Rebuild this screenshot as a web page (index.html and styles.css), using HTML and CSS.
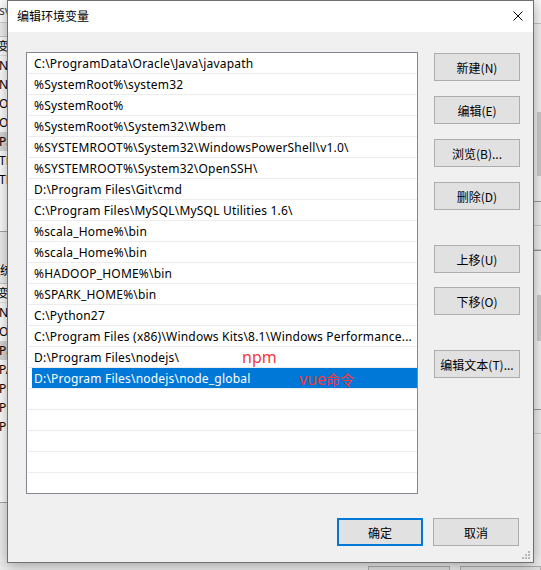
FILE: index.html
```html
<!DOCTYPE html>
<html lang="zh-CN">
<head>
    <meta charset="UTF-8">
    <title>编辑环境变量</title>
    <link rel="stylesheet" href="styles.css">
</head>
<body>
    <div class="desktop">
        <!-- parent window (环境变量) peeking out behind the dialog -->
        <div class="back-left">
            <div class="bl-title">sv</div>
            <div class="bl-list">
                <div class="bl-row bl-head">变量</div>
                <div class="bl-row">NUMBER</div>
                <div class="bl-row">NVM</div>
                <div class="bl-row">OneDrive</div>
                <div class="bl-row">OneDrive</div>
                <div class="bl-row bl-sel">Path</div>
                <div class="bl-row">TEMP</div>
                <div class="bl-row">TMP</div>
            </div>
            <div class="bl-label">系统变量</div>
            <div class="bl-list bl-list-sys">
                <div class="bl-row bl-head">变量</div>
                <div class="bl-row">NUMBER</div>
                <div class="bl-row">OS</div>
                <div class="bl-row bl-sel">Path</div>
                <div class="bl-row">PATHEXT</div>
                <div class="bl-row">PROCESSOR</div>
                <div class="bl-row">PROCESSOR</div>
                <div class="bl-row">PROCESSOR</div>
            </div>
        </div>

        <div class="back-right">
            <div class="br-top"></div>
            <div class="br-track"><span class="br-thumb"></span></div>
            <div class="br-row"></div>
            <div class="br-row"></div>
            <div class="br-track br-track-sys"><span class="br-thumb"></span></div>
            <div class="br-row"></div>
        </div>

        <div class="back-bottom">
            <span class="back-btn"></span>
            <span class="back-btn"></span>
        </div>

        <div class="dialog">
            <div class="titlebar">
                <span class="title">编辑环境变量</span>
                <svg class="close" width="10" height="10" viewBox="0 0 10 10">
                    <path d="M0.5 0.5 L9.5 9.5 M9.5 0.5 L0.5 9.5" stroke="#000" stroke-width="1" fill="none"/>
                </svg>
            </div>

            <div class="dialog-body">
                <div class="main">
                    <div class="path-list">
                        <div class="row"><span class="cell">C:\ProgramData\Oracle\Java\javapath</span></div>
                        <div class="row"><span class="cell">%SystemRoot%\system32</span></div>
                        <div class="row"><span class="cell">%SystemRoot%</span></div>
                        <div class="row"><span class="cell">%SystemRoot%\System32\Wbem</span></div>
                        <div class="row"><span class="cell">%SYSTEMROOT%\System32\WindowsPowerShell\v1.0\</span></div>
                        <div class="row"><span class="cell">%SYSTEMROOT%\System32\OpenSSH\</span></div>
                        <div class="row"><span class="cell">D:\Program Files\Git\cmd</span></div>
                        <div class="row"><span class="cell">C:\Program Files\MySQL\MySQL Utilities 1.6\</span></div>
                        <div class="row"><span class="cell">%scala_Home%\bin</span></div>
                        <div class="row"><span class="cell">%scala_Home%\bin</span></div>
                        <div class="row"><span class="cell">%HADOOP_HOME%\bin</span></div>
                        <div class="row"><span class="cell">%SPARK_HOME%\bin</span></div>
                        <div class="row"><span class="cell">C:\Python27</span></div>
                        <div class="row"><span class="cell">C:\Program Files (x86)\Windows Kits\8.1\Windows Performance...</span></div>
                        <div class="row"><span class="cell">D:\Program Files\nodejs\</span></div>
                        <div class="row selected"><span class="cell">D:\Program Files\nodejs\node_global</span></div>
                        <div class="row"><span class="cell"></span></div>
                        <div class="row"><span class="cell"></span></div>
                        <div class="row"><span class="cell"></span></div>
                        <div class="row"><span class="cell"></span></div>
                        <div class="row"><span class="cell"></span></div>

                        <!-- hand-written notes on top of the list -->
                        <span class="note note-npm">npm</span>
                        <span class="note note-vue">vue<small>命令</small></span>
                    </div>

                    <div class="side-buttons">
                        <div class="btn-group">
                            <button class="btn">新建(N)</button>
                            <button class="btn">编辑(E)</button>
                            <button class="btn">浏览(B)...</button>
                            <button class="btn">删除(D)</button>
                        </div>
                        <div class="btn-group">
                            <button class="btn">上移(U)</button>
                            <button class="btn">下移(O)</button>
                        </div>
                        <div class="btn-group">
                            <button class="btn">编辑文本(T)...</button>
                        </div>
                    </div>
                </div>

                <div class="footer">
                    <button class="btn default">确定</button>
                    <button class="btn">取消</button>
                </div>
            </div>

            <svg class="grip" width="8" height="8" viewBox="0 0 8 8">
                <rect x="6" y="0" width="2" height="2" fill="#b8b8b8"/>
                <rect x="3" y="3" width="2" height="2" fill="#b8b8b8"/>
                <rect x="6" y="3" width="2" height="2" fill="#b8b8b8"/>
                <rect x="0" y="6" width="2" height="2" fill="#b8b8b8"/>
                <rect x="3" y="6" width="2" height="2" fill="#b8b8b8"/>
                <rect x="6" y="6" width="2" height="2" fill="#b8b8b8"/>
            </svg>
        </div>
    </div>
</body>
</html>
```

FILE: styles.css
```css
* {
    margin: 0;
    padding: 0;
    box-sizing: border-box;
}

body {
    font-family: 'Noto Sans', 'Noto Sans CJK SC', sans-serif;
    font-size: 12px;
    color: #000;
    background: #f0f0f0;
}

.desktop {
    position: relative;
    width: 541px;
    height: 570px;
    overflow: hidden;
    background: #ececec;
}

/* ---- parent window behind ---- */

.back-left {
    position: absolute;
    left: 0;
    top: 0;
    width: 7px;
    height: 570px;
    background: #f0f0f0;
    overflow: hidden;
    white-space: nowrap;
}

.bl-title {
    height: 23px;
    line-height: 22px;
    background: #fff;
    border-bottom: 1px solid #d4d4d4;
    color: #444;
    text-indent: -1px;
}

.bl-list {
    margin-top: 13px;
    height: 196px;
    background: #fff;
    border-top: 1px solid #c8c8c8;
    border-bottom: 1px solid #a8a8a8;
}

.bl-row {
    height: 19px;
    line-height: 19px;
    text-indent: -1px;
}

.bl-head {
    text-indent: -3px;
    border-bottom: 1px solid #e4e4e4;
}

.bl-sel {
    background: #d9d9d9;
}

.bl-label {
    margin-top: 27px;
    height: 24px;
    line-height: 24px;
    text-indent: -12px;
}

.bl-list-sys {
    margin-top: 0;
    height: 220px;
}

.back-right {
    position: absolute;
    left: 533px;
    top: 0;
    width: 8px;
    height: 570px;
    background: #f0f0f0;
}

.br-top {
    height: 24px;
    background: #fafafa;
    border-bottom: 1px solid #c8c8c8;
}

.br-track {
    position: relative;
    height: 178px;
    background: #f4f4f4;
    border-left: 1px solid #e0e0e0;
    border-bottom: 1px solid #9a9a9a;
}

.br-thumb {
    position: absolute;
    left: 3px;
    top: 88px;
    width: 5px;
    height: 64px;
    background: #cdcdcd;
}

.br-row {
    height: 24px;
    border-bottom: 1px solid #cfcfcf;
}

.br-track-sys {
    height: 160px;
    border-top: 1px solid #9a9a9a;
}

.br-track-sys .br-thumb {
    top: 44px;
    height: 46px;
}

.back-bottom {
    position: absolute;
    left: 0;
    top: 562px;
    width: 541px;
    height: 8px;
    display: flex;
    gap: 10px;
    padding: 4px 0 0 368px;
    background: #ececec;
}

.back-btn {
    width: 86px;
    height: 28px;
    background: #e1e1e1;
    border: 1px solid #adadad;
}

/* ---- the dialog ---- */

.dialog {
    position: absolute;
    left: 7px;
    top: 0;
    width: 527px;
    height: 563px;
    background: #f0f0f0;
    border: 1px solid #707070;
    box-shadow: 0 2px 14px rgba(0, 0, 0, 0.35);
    font-family: 'Noto Sans CJK SC', 'Noto Sans', sans-serif;
}

.titlebar {
    height: 31px;
    background: #fff;
    display: flex;
    align-items: center;
    justify-content: space-between;
    padding: 0 10px 1px 9px;
}

.title {
    font-size: 12px;
    line-height: 16px;
}

.close {
    display: block;
}

.dialog-body {
    padding: 20px 13px 16px 18px;
}

.main {
    display: flex;
    gap: 16px;
}

.path-list {
    position: relative;
    width: 392px;
    height: 442px;
    background: #fff;
    border: 1px solid #828790;
    padding-left: 1px;
    overflow: hidden;
    font-family: 'Noto Sans', 'Noto Sans CJK SC', sans-serif;
}

.row {
    height: 21px;
    border-bottom: 1px solid #ececec;
}

.cell {
    display: block;
    height: 20px;
    line-height: 22px;
    margin-left: 4px;
    padding: 0 4px 0 2px;
    letter-spacing: 0.2px;
    white-space: nowrap;
    overflow: hidden;
}

.row.selected .cell {
    background: #0078d7;
    color: #fff;
}

.note {
    position: absolute;
    font-family: 'Noto Sans', 'Noto Sans CJK SC', sans-serif;
    font-size: 16px;
    line-height: 20px;
    color: #f2383a;
    white-space: nowrap;
}

.note small {
    font-size: 14px;
    font-family: 'Noto Sans CJK SC', sans-serif;
}

.note-npm {
    left: 215px;
    top: 294px;
}

.note-vue {
    left: 272px;
    top: 316px;
}

.side-buttons {
    display: flex;
    flex-direction: column;
    gap: 35px;
    padding-top: 1px;
}

.btn-group {
    display: flex;
    flex-direction: column;
    gap: 15px;
}

.btn-group:nth-child(2) {
    gap: 14px;
}

.btn {
    width: 86px;
    height: 28px;
    background: #e1e1e1;
    border: 1px solid #adadad;
    font-family: 'Noto Sans CJK SC', sans-serif;
    font-size: 12px;
    color: #000;
}

.btn.default {
    border: 2px solid #0078d7;
}

.footer {
    display: flex;
    justify-content: flex-end;
    gap: 10px;
    margin-top: 24px;
    padding-right: 1px;
}

.grip {
    position: absolute;
    right: 3px;
    bottom: 3px;
}
```
